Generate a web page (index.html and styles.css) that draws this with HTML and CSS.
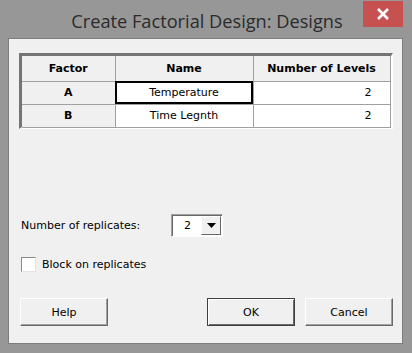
FILE: index.html
```html
<!DOCTYPE html>
<html>
<head>
    <title>Create Factorial Design: Designs</title>
    <link rel="stylesheet" href="styles.css">
</head>
<body>
    <div class="window">
        <div class="titlebar">
            <div class="title">Create Factorial Design: Designs</div>
            <div class="close">
                <svg width="14" height="12" viewBox="0 0 14 12">
                    <path d="M2 1 L12 11 M12 1 L2 11" stroke="#fff" stroke-width="2.6" fill="none"/>
                </svg>
            </div>
        </div>

        <div class="client">
            <div class="grid-wrap">
                <table class="grid">
                    <tr>
                        <th class="col-factor">Factor</th>
                        <th class="col-name">Name</th>
                        <th class="col-levels">Number of Levels</th>
                    </tr>
                    <tr>
                        <th>A</th>
                        <td class="name selected">Temperature</td>
                        <td class="num">2</td>
                    </tr>
                    <tr>
                        <th>B</th>
                        <td class="name">Time Legnth</td>
                        <td class="num">2</td>
                    </tr>
                </table>
            </div>

            <div class="replicates">
                <label>Number of replicates:</label>
                <div class="combo">
                    <span class="combo-value">2</span>
                    <span class="combo-btn">
                        <svg width="9" height="5" viewBox="0 0 9 5"><path d="M0 0 H9 L4.5 5 Z" fill="#000"/></svg>
                    </span>
                </div>
            </div>

            <div class="check-row">
                <span class="checkbox"></span>
                <span>Block on replicates</span>
            </div>

            <div class="buttons">
                <button class="btn">Help</button>
                <div class="spacer"></div>
                <button class="btn btn-default">OK</button>
                <button class="btn">Cancel</button>
            </div>
        </div>
    </div>
</body>
</html>
```

FILE: styles.css
```css
* {
    margin: 0;
    padding: 0;
    box-sizing: border-box;
}

body {
    background: #979797;
    font-family: 'DejaVu Sans', Tahoma, sans-serif;
    font-size: 11px;
    color: #000;
}

.window {
    width: 412px;
    height: 353px;
    background: #979797;
    display: flex;
    flex-direction: column;
}

.titlebar {
    position: relative;
    height: 38px;
    display: flex;
    justify-content: center;
    align-items: center;
}

.title {
    font-family: 'Open Sans', 'Noto Sans', sans-serif;
    font-size: 18.2px;
    color: #2b2b2b;
    padding-top: 3px;
    padding-left: 2px;
}

.close {
    position: absolute;
    top: 1px;
    right: 9px;
    width: 40px;
    height: 26px;
    background: #c75050;
    display: flex;
    justify-content: center;
    align-items: center;
}

.client {
    margin: 0 9px 9px 8px;
    height: 306px;
    background: #f0f0f0;
    border: 1px solid #7e7e7e;
    padding: 14px 9px 0 10px;
    display: flex;
    flex-direction: column;
}

/* worksheet-like table */
.grid-wrap {
    width: 374px;
    height: 76px;
    border-top: 3px solid #747474;
    border-left: 3px solid #747474;
    border-right: 2px solid #fff;
    border-bottom: 2px solid #fff;
    background: #f0f0f0;
}

.grid {
    border-collapse: collapse;
    table-layout: fixed;
    width: 368px;
}

.grid th,
.grid td {
    border-right: 1px solid #a0a0a0;
    border-bottom: 1px solid #a0a0a0;
    height: 23px;
    white-space: nowrap;
}

.grid tr:first-child th {
    height: 25px;
}

.grid th {
    background: #f0f0f0;
    font-weight: bold;
    text-align: center;
}

.col-factor { width: 93px; }
.col-name { width: 138px; }
.col-levels { width: 137px; }

.grid td {
    background: #fff;
}

.grid td.name {
    text-align: center;
}

.grid td.selected {
    outline: 2px solid #000;
    outline-offset: -2px;
}

.grid td.num {
    text-align: right;
    padding-right: 18px;
}

/* replicates */
.replicates {
    margin-top: 85px;
    display: flex;
    align-items: center;
    height: 23px;
}

.replicates label {
    width: 152px;
    padding-left: 2px;
}

.combo {
    width: 52px;
    height: 23px;
    background: #fff;
    border-top: 1px solid #a0a0a0;
    border-left: 1px solid #a0a0a0;
    border-right: 1px solid #fff;
    border-bottom: 1px solid #fff;
    box-shadow: inset 1px 1px 0 #696969;
    display: flex;
    align-items: center;
    padding: 1px 1px 1px 12px;
}

.combo-value {
    flex: 1;
}

.combo-btn {
    width: 20px;
    height: 19px;
    background: #f0f0f0;
    border-top: 1px solid #fff;
    border-left: 1px solid #fff;
    border-right: 1px solid #696969;
    border-bottom: 1px solid #696969;
    display: flex;
    justify-content: center;
    align-items: center;
}

/* checkbox */
.check-row {
    margin-top: 20px;
    display: flex;
    align-items: center;
    gap: 6px;
    height: 15px;
    padding-left: 2px;
}

.checkbox {
    width: 15px;
    height: 15px;
    background: #fff;
    border-top: 1px solid #8a8a8a;
    border-left: 1px solid #8a8a8a;
    border-right: 1px solid #e3e3e3;
    border-bottom: 1px solid #e3e3e3;
}

/* buttons */
.buttons {
    margin-top: 26px;
    display: flex;
    gap: 10px;
    padding-left: 1px;
}

.spacer {
    flex: 1;
}

.btn {
    width: 88px;
    height: 28px;
    background: #f0f0f0;
    font-family: 'DejaVu Sans', Tahoma, sans-serif;
    font-size: 11px;
    color: #000;
    border-top: 1px solid #fff;
    border-left: 1px solid #fff;
    border-right: 1px solid #696969;
    border-bottom: 1px solid #696969;
    box-shadow: inset -1px -1px 0 #a0a0a0;
}

.btn-default {
    border: 1px solid #404040;
    box-shadow: inset 1px 1px 0 #fff, inset -1px -1px 0 #696969;
}
```
